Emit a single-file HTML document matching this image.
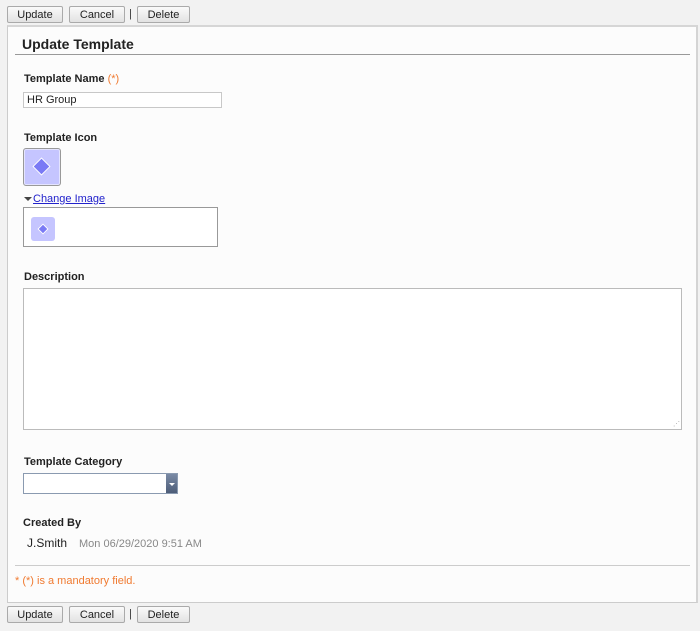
<!DOCTYPE html>
<html><head><meta charset="utf-8"><style>
*{box-sizing:border-box;margin:0;padding:0}
body{width:700px;height:631px;background:#f2f2f2;font-family:"Liberation Sans",Arial,sans-serif;font-size:11px;color:#222;position:relative;overflow:hidden}
.a{position:absolute}
.btn{position:absolute;height:17px;border:1px solid #aaa;border-radius:2px;background:linear-gradient(#fafafa,#e2e2e2);font-size:11px;color:#222;text-align:center;line-height:16px}
.sep{position:absolute;font-size:11px;color:#333}
.panel{position:absolute;left:7px;top:25px;width:691px;height:578px;background:#fcfcfc;border:1px solid #ccc;border-top:2px solid #d6d6d6;border-right:2px solid #d4d4d4}
.lbl{position:absolute;font-weight:bold;font-size:11px;color:#222}
.inp{position:absolute;border:1px solid #c8c8c8;background:#fff}
</style></head><body>
<div class="btn" style="left:7px;top:6px;width:56px">Update</div>
<div class="btn" style="left:69px;top:6px;width:56px">Cancel</div>
<div class="sep" style="left:129px;top:8px">|</div>
<div class="btn" style="left:137px;top:6px;width:53px">Delete</div>

<div class="panel"></div>
<div class="a" style="left:22px;top:36px;font-size:14px;font-weight:bold;color:#222">Update Template</div>
<div class="a" style="left:15px;top:54px;width:675px;height:1px;background:#999"></div>

<div class="lbl" style="left:24px;top:73px">Template Name <span style="color:#f07a30;font-weight:normal">(*)</span></div>
<div class="inp" style="left:23px;top:92px;width:199px;height:16px;padding-left:3px;line-height:14px;font-size:11px">HR Group</div>

<div class="lbl" style="left:24px;top:132px">Template Icon</div>
<div class="a" style="left:23px;top:148px;width:38px;height:38px;border:1px solid #999;border-radius:3px;background:#c5c5ff;box-shadow:inset 0 0 0 1px #e4e4ff"></div>
<div class="a" style="left:35px;top:160px;width:13px;height:13px;background:#7a7af5;border:1.5px solid #fff;transform:rotate(45deg)"></div>

<div class="a" style="left:24px;top:193px;font-size:11px"><span style="display:inline-block;width:0;height:0;border-left:4px solid transparent;border-right:4px solid transparent;border-top:4px solid #444;vertical-align:middle;margin-right:1px"></span><span style="color:#2222cc;text-decoration:underline">Change Image</span></div>
<div class="a" style="left:23px;top:207px;width:195px;height:40px;border:1px solid #999;background:#fff"></div>
<div class="a" style="left:31px;top:217px;width:24px;height:24px;border-radius:3px;background:#c5c5ff"></div>
<div class="a" style="left:39px;top:225px;width:8px;height:8px;background:#7a7af5;border:1px solid #fff;transform:rotate(45deg)"></div>

<div class="lbl" style="left:24px;top:271px">Description</div>
<div class="inp" style="left:23px;top:288px;width:659px;height:142px;border-color:#bbb"></div>
<div class="a" style="left:673px;top:420px;font-size:7px;color:#aaa">⋰</div>

<div class="lbl" style="left:24px;top:456px">Template Category</div>
<div class="inp" style="left:23px;top:473px;width:155px;height:21px;border-color:#8a9ab0"></div>
<div class="a" style="left:166px;top:474px;width:11px;height:19px;background:linear-gradient(#7a8aa5,#4d5d78)"></div>
<div class="a" style="left:169px;top:483px;width:0;height:0;border-left:3px solid transparent;border-right:3px solid transparent;border-top:3px solid #fff"></div>

<div class="lbl" style="left:23px;top:517px">Created By</div>
<div class="a" style="left:27px;top:536px;font-size:12px;color:#222">J.Smith</div>
<div class="a" style="left:79px;top:538px;font-size:11px;color:#888">Mon 06/29/2020 9:51 AM</div>

<div class="a" style="left:15px;top:565px;width:675px;height:1px;background:#ccc"></div>
<div class="a" style="left:15px;top:575px;font-size:11px;color:#f07a30">* (*) is a mandatory field.</div>

<div class="btn" style="left:7px;top:606px;width:56px">Update</div>
<div class="btn" style="left:69px;top:606px;width:56px">Cancel</div>
<div class="sep" style="left:129px;top:608px">|</div>
<div class="btn" style="left:137px;top:606px;width:53px">Delete</div>
</body></html>
